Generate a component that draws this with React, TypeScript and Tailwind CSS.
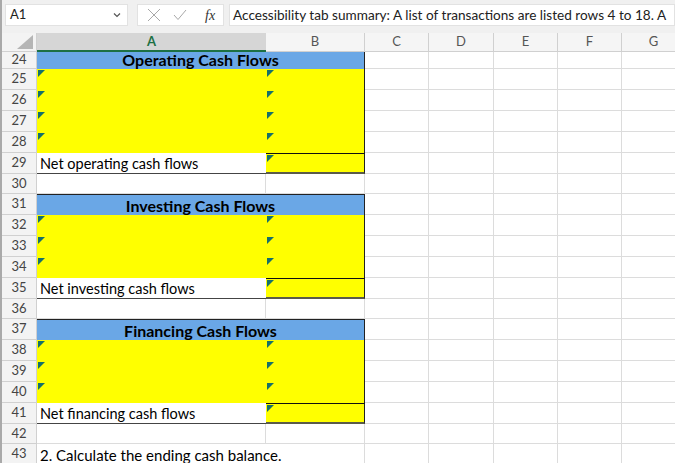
import React from "react";

type Row = {
  n: number;
  kind: "title" | "input" | "total" | "blank" | "text";
  label?: string;
  h?: number;
  top?: boolean;
};

const rows: Row[] = [
  { n: 24, kind: "title", label: "Operating Cash Flows", h: 17 },
  { n: 25, kind: "input" },
  { n: 26, kind: "input" },
  { n: 27, kind: "input" },
  { n: 28, kind: "input" },
  { n: 29, kind: "total", label: "Net operating cash flows" },
  { n: 30, kind: "blank", h: 20 },
  { n: 31, kind: "title", label: "Investing Cash Flows", top: true },
  { n: 32, kind: "input" },
  { n: 33, kind: "input" },
  { n: 34, kind: "input" },
  { n: 35, kind: "total", label: "Net investing cash flows" },
  { n: 36, kind: "blank", h: 20 },
  { n: 37, kind: "title", label: "Financing Cash Flows", top: true },
  { n: 38, kind: "input" },
  { n: 39, kind: "input" },
  { n: 40, kind: "input" },
  { n: 41, kind: "total", label: "Net financing cash flows" },
  { n: 42, kind: "blank", h: 20 },
  { n: 43, kind: "text", label: "2. Calculate the ending cash balance." },
];

const font = { fontFamily: "Lato, 'Open Sans', sans-serif" };

// little green "error" marker in the corner of a cell
const Marker = () => (
  <svg width="7" height="7" className="absolute left-[1px] top-[1px]">
    <polygon points="0,0 7,0 0,7" fill="#16706a" />
  </svg>
);

const EmptyCols = () => (
  <>
    <div className="w-[64px] shrink-0 border-r border-b border-[#dcdcdc] bg-white" />
    <div className="w-[65px] shrink-0 border-r border-b border-[#dcdcdc] bg-white" />
    <div className="w-[64px] shrink-0 border-r border-b border-[#dcdcdc] bg-white" />
    <div className="w-[64px] shrink-0 border-r border-b border-[#dcdcdc] bg-white" />
    <div className="w-[64px] shrink-0 border-r border-b border-[#dcdcdc] bg-white" />
  </>
);

const SheetRow = ({ row }: { row: Row }) => {
  const h = row.h === 17 ? "h-[17px]" : row.h === 20 ? "h-[20px]" : "h-[21px]";
  return (
    <div className={`flex ${h}`}>
      <div className="w-[35px] shrink-0 flex items-center justify-center border-r border-b border-[#d0d0d0] bg-[#f3f3f3] text-[13px] text-[#444]">
        {row.n}
      </div>

      {row.kind === "title" && (
        <div
          className={`w-[328px] shrink-0 flex items-end justify-center bg-[#6aa7e6] border-r border-r-[#222] text-[16px] font-bold leading-[18px] text-black ${
            row.top ? "border-t border-t-[#222]" : ""
          }`}
        >
          {row.label}
        </div>
      )}

      {row.kind === "input" && (
        <>
          <div className="relative w-[229px] shrink-0 bg-[#ffff00]">
            <Marker />
          </div>
          <div className="relative w-[99px] shrink-0 bg-[#ffff00] border-r border-r-[#222]">
            <Marker />
          </div>
        </>
      )}

      {row.kind === "total" && (
        <>
          <div className="w-[229px] shrink-0 flex items-end pl-[3px] bg-white border-b border-b-[#444] text-[14.5px] leading-[19px] text-black">
            {row.label}
          </div>
          <div className="relative w-[99px] shrink-0 bg-[#ffff00] border-t border-t-[#111] border-r border-r-[#222] border-b-2 border-b-[#5b5b4a]">
            <Marker />
          </div>
        </>
      )}

      {row.kind === "blank" && (
        <>
          <div className="w-[229px] shrink-0 border-r border-b border-[#dcdcdc] bg-white" />
          <div className="w-[99px] shrink-0 border-r border-b border-[#dcdcdc] bg-white" />
        </>
      )}

      {row.kind === "text" && (
        <>
          <div className="relative z-10 w-[229px] shrink-0 flex items-end pl-[3px] whitespace-nowrap overflow-visible text-[15px] leading-[20px] text-black">
            {row.label}
          </div>
          <div className="w-[99px] shrink-0 border-r border-b border-[#dcdcdc] bg-white" />
        </>
      )}

      <EmptyCols />
    </div>
  );
};

export default function App() {
  return (
    <div
      className="w-[675px] h-[463px] overflow-hidden bg-white border-l-2 border-[#a9a9a9]"
      style={font}
    >
      {/* formula bar */}
      <div className="flex items-center h-[33px] bg-[#f0f0f0] pl-[3px] pb-[6px] pt-[3px]">
        <div className="flex items-center justify-between w-[123px] h-[22px] bg-white border border-[#e2e2e2] pl-[4px] pr-[6px] text-[13px] text-[#222]">
          <span>A1</span>
          <svg width="8" height="6" viewBox="0 0 8 6">
            <path d="M1 1.5 L4 4.5 L7 1.5" stroke="#555" strokeWidth="1.2" fill="none" />
          </svg>
        </div>
        <div className="flex items-center ml-[9px] w-[87px] h-[22px] bg-white border border-[#e2e2e2] pl-[9px] gap-[12px]">
          <svg width="14" height="14" viewBox="0 0 14 14">
            <path d="M1 1 L13 13 M13 1 L1 13" stroke="#a8a8a8" strokeWidth="1" fill="none" />
          </svg>
          <svg width="14" height="12" viewBox="0 0 14 12">
            <path d="M1 6 L5 10.5 L13 1" stroke="#a8a8a8" strokeWidth="1" fill="none" />
          </svg>
          <span
            className="ml-[6px] text-[14px] italic text-[#333]"
            style={{ fontFamily: "'Liberation Serif', serif" }}
          >
            fx
          </span>
        </div>
        <div className="flex items-center ml-[5px] flex-1 h-[22px] bg-white border border-[#e2e2e2] pl-[3px] whitespace-nowrap overflow-hidden text-[13.6px] text-[#222]">
          Accessibility tab summary: A list of transactions are listed rows 4 to 18. A
        </div>
      </div>

      {/* column headers */}
      <div className="flex h-[19px] text-[13px] text-[#555]">
        <div className="relative w-[35px] shrink-0 bg-[#f3f3f3] border-r border-b border-[#d0d0d0]">
          <svg width="16" height="14" className="absolute right-[3px] bottom-[2px]">
            <polygon points="16,0 16,14 0,14" fill="#b5b5b5" />
          </svg>
        </div>
        <div className="w-[229px] shrink-0 flex items-center justify-center bg-[#d6d6d6] border-b-2 border-[#1d7044] font-bold text-[#1d7044]">
          A
        </div>
        <div className="w-[99px] shrink-0 flex items-center justify-center bg-[#f5f5f5] border-r border-b border-[#d0d0d0]">B</div>
        <div className="w-[64px] shrink-0 flex items-center justify-center bg-[#f5f5f5] border-r border-b border-[#d0d0d0]">C</div>
        <div className="w-[65px] shrink-0 flex items-center justify-center bg-[#f5f5f5] border-r border-b border-[#d0d0d0]">D</div>
        <div className="w-[64px] shrink-0 flex items-center justify-center bg-[#f5f5f5] border-r border-b border-[#d0d0d0]">E</div>
        <div className="w-[64px] shrink-0 flex items-center justify-center bg-[#f5f5f5] border-r border-b border-[#d0d0d0]">F</div>
        <div className="w-[64px] shrink-0 flex items-center justify-center bg-[#f5f5f5] border-r border-b border-[#d0d0d0]">G</div>
      </div>

      {rows.map((r) => (
        <SheetRow key={r.n} row={r} />
      ))}
    </div>
  );
}
